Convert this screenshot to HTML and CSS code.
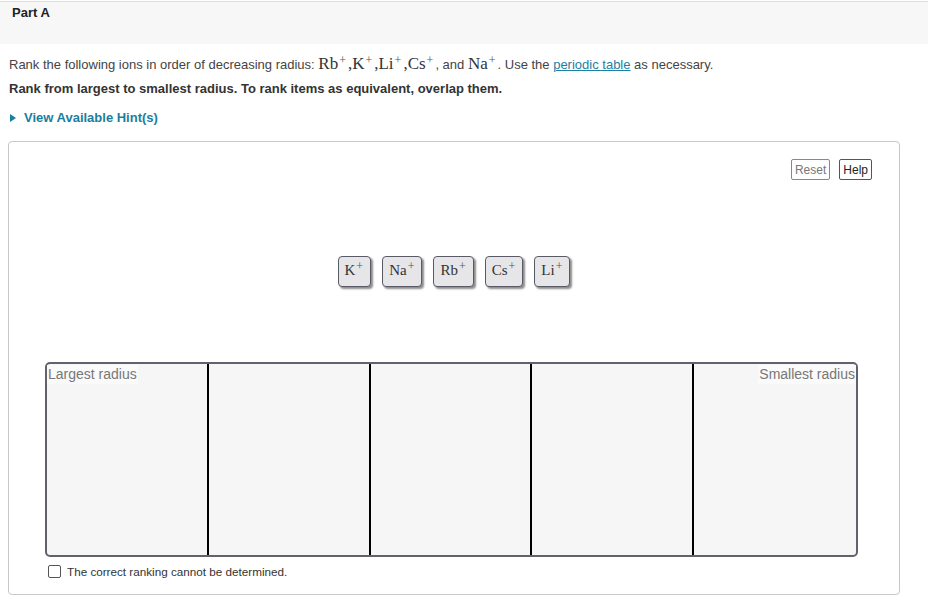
FILE: index.html
```html
<!DOCTYPE html>
<html lang="en">
<head>
  <meta charset="UTF-8">
  <title>Part A</title>
  <link rel="stylesheet" href="styles.css">
</head>
<body>
  <div class="part-header">Part A</div>

  <p class="question">Rank the following ions in order of decreasing radius:
    <span class="math">Rb<sup>+</sup>,K<sup>+</sup>,Li<sup>+</sup>,Cs<sup>+</sup></span>, and
    <span class="math">Na<sup>+</sup></span>. Use the <a href="#" class="link">periodic table</a> as necessary.</p>
  <p class="instruction">Rank from largest to smallest radius. To rank items as equivalent, overlap them.</p>
  <div class="hint"><span class="arrow"></span>View Available Hint(s)</div>

  <div class="rank-box">
    <div class="tools">
      <button class="tool-btn reset">Reset</button>
      <button class="tool-btn">Help</button>
    </div>

    <div class="tiles">
      <div class="tile">K<sup>+</sup></div>
      <div class="tile">Na<sup>+</sup></div>
      <div class="tile">Rb<sup>+</sup></div>
      <div class="tile">Cs<sup>+</sup></div>
      <div class="tile">Li<sup>+</sup></div>
    </div>

    <div class="ranking">
      <div class="slot"><span class="label">Largest radius</span></div>
      <div class="slot"></div>
      <div class="slot"></div>
      <div class="slot"></div>
      <div class="slot right"><span class="label">Smallest radius</span></div>
    </div>

    <label class="cannot"><span class="box"></span>The correct ranking cannot be determined.</label>
  </div>
</body>
</html>
```

FILE: styles.css
```css
body {
  margin: 0;
  font-family: "Liberation Sans", Arial, sans-serif;
  color: #333;
  background: #fff;
}

.part-header {
  margin-top: 1px;
  border-top: 1px solid #dcdcdc;
  background: #f7f7f7;
  height: 43px;
  padding: 3px 12px 0;
  box-sizing: border-box;
  font-size: 13px;
  font-weight: bold;
  color: #222;
}

.question {
  margin: 9px 0 0 9px;
  font-size: 13px;
  line-height: 22px;
  color: #444;
}

.math {
  font-family: "Liberation Serif", "Times New Roman", serif;
  font-size: 17px;
  color: #333;
}

.math sup, .tile sup {
  font-size: 12px;
  vertical-align: 5px;
  line-height: 0;
  margin: 0 2px 0 1px;
  color: #555;
}

.link {
  color: #1b7fa6;
}

.instruction {
  margin: 3px 0 0 9px;
  font-size: 13px;
  font-weight: bold;
  line-height: 20px;
  color: #333;
}

.hint {
  margin: 9px 0 0 10px;
  font-size: 13px;
  font-weight: bold;
  color: #1a7ea0;
  line-height: 20px;
  display: flex;
  align-items: center;
}

.arrow {
  width: 0;
  height: 0;
  border-top: 4.5px solid transparent;
  border-bottom: 4.5px solid transparent;
  border-left: 6px solid #1a7ea0;
  margin-right: 8px;
}

.rank-box {
  margin: 13px 28px 0 8px;
  height: 454px;
  box-sizing: border-box;
  border: 1px solid #c8c8c8;
  border-radius: 4px;
  padding-top: 17px;
  display: flex;
  flex-direction: column;
}

.tools {
  display: flex;
  justify-content: flex-end;
  gap: 9px;
  padding-right: 27px;
}

.tool-btn {
  font-family: "Liberation Sans", Arial, sans-serif;
  font-size: 12px;
  background: #fff;
  border: 1px solid #555;
  border-radius: 2px;
  height: 21px;
  padding: 0 3px;
  color: #222;
}

.tool-btn.reset {
  color: #777;
  border-color: #888;
}

.tiles {
  display: flex;
  justify-content: center;
  gap: 11px;
  margin-top: 76px;
}

.tile {
  height: 31px;
  box-sizing: border-box;
  padding: 0 5px 0 6px;
  border: 1.5px solid #5a5a66;
  border-radius: 4px;
  background: #e6e6e8;
  box-shadow: 2px 2px 2px rgba(0, 0, 0, 0.45);
  font-family: "Liberation Serif", "Times New Roman", serif;
  font-size: 15px;
  line-height: 27px;
  color: #333;
}

.ranking {
  margin: 75px 0 0 36px;
  width: 813px;
  height: 195px;
  box-sizing: border-box;
  border: 2px solid #62626e;
  border-radius: 5px;
  background: #f6f6f6;
  display: grid;
  grid-template-columns: repeat(5, 1fr);
}

.slot {
  border-right: 2px solid #000;
}

.slot:last-child {
  border-right: none;
}

.slot.right {
  text-align: right;
}

.label {
  display: inline-block;
  background: #fafafa;
  color: #777;
  font-size: 14px;
  line-height: 19px;
  padding: 0 1px;
  margin-top: 1px;
}

.cannot {
  display: flex;
  align-items: center;
  margin: 8px 0 0 39px;
  font-size: 11.7px;
  color: #333;
}

.cannot .box {
  width: 11px;
  height: 11px;
  border: 1px solid #555;
  border-radius: 2px;
  margin-right: 6px;
}
```
